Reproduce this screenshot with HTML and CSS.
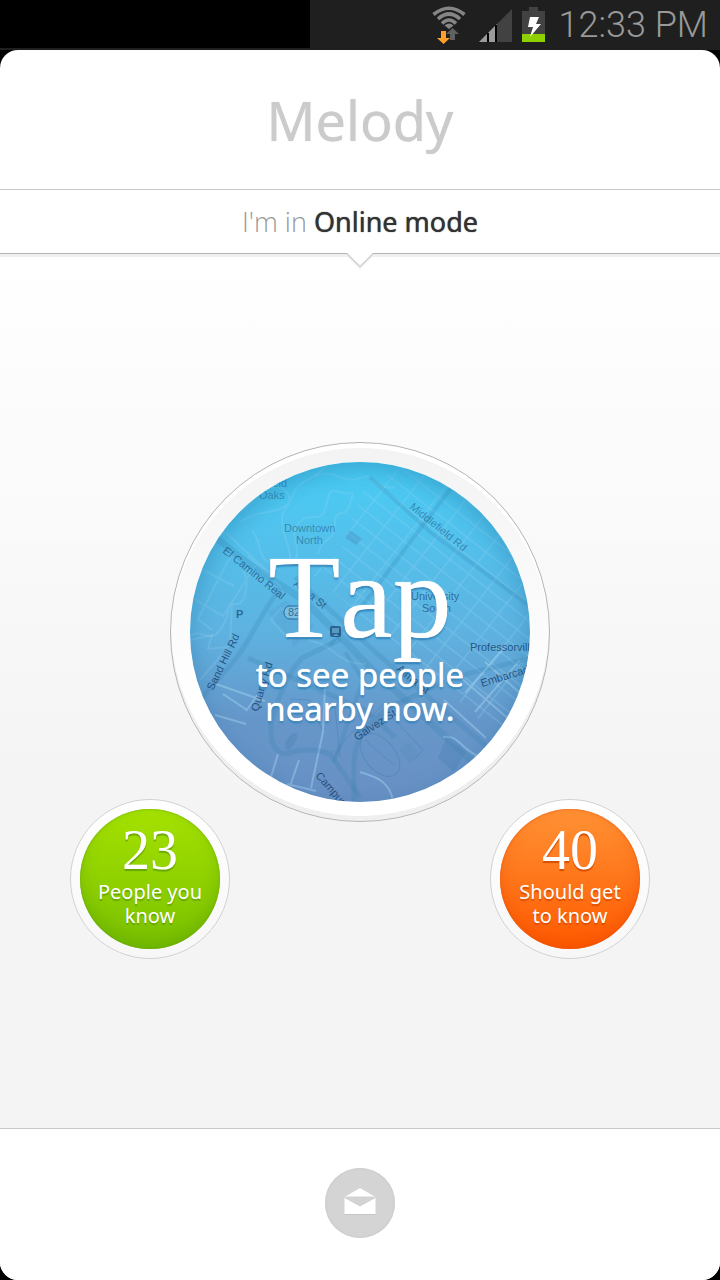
FILE: index.html
```html
<!DOCTYPE html>
<html lang="en">
<head>
<meta charset="utf-8">
<meta name="viewport" content="width=device-width, initial-scale=1">
<title>Melody</title>
<link rel="stylesheet" href="styles.css">
</head>
<body>
<div class="status">
  <div class="status-notices"></div>
  <div class="status-icons">
    <svg class="wifi" width="36" height="40" viewBox="0 0 36 40" aria-hidden="true">
      <g fill="none" stroke="#858585" stroke-width="3.6">
        <path d="M1.500 8.500Q17 -4 32.500 8.500"/>
        <path d="M6 13Q17 3 28 13"/>
        <path d="M10 17.500Q17 10.500 24 17.500"/>
      </g>
      <path d="M12.500 19.500Q17 15.500 21.500 19.500L17 23Z" fill="#858585"/>
      <path d="M9 25h5v7h4l-6.500 6L5 32h4z" fill="#ff9f2a"/>
      <path d="M18 34v-6h-4l6.500-6 6.500 6h-4v6z" fill="#606060"/>
    </svg>
    <svg class="signal" width="34" height="34" viewBox="0 0 34 34" aria-hidden="true">
      <path d="M0 33L33 0V33Z" fill="#424242"/>
      <path d="M0 33L18 15V33Z" fill="#9b9b9b"/>
      <path d="M9 24V33M17 16V33" stroke="#000" stroke-width="2"/>
    </svg>
    <svg class="battery" width="23" height="35" viewBox="0 0 23 35" aria-hidden="true">
      <path d="M0 4H7V0H16V4H23V35H0Z" fill="#424242"/>
      <path d="M0 27H23V35H0Z" fill="#8fd000"/>
      <path d="M8 10H17L14 17H19L8 30L11 20H6Z" fill="#fff"/>
    </svg>
    <time>12:33 PM</time>
  </div>
</div>

<div class="app">
  <header class="header"><h1>Melody</h1></header>
  <div class="mode">
    <p>I'm in <strong>Online mode</strong></p>
    <svg class="notch" width="28" height="17" viewBox="0 0 28 17" aria-hidden="true">
      <path d="M1 3L14 15.500L27 3" fill="none" stroke="#ececec" stroke-width="2"/>
      <path d="M0 0L0.500 1L14 14.500L27.500 1L28 0Z" fill="#fff"/>
      <path d="M0.500 1L14 14.500L27.500 1" fill="none" stroke="#b4b4b4"/>
    </svg>
  </div>

  <main class="stage">
    <button class="tap" type="button">
      <span class="tap-disc">
        <svg class="map" viewBox="0 0 340 340" aria-hidden="true">
          <defs>
            <linearGradient id="sky" x1="0" y1="0" x2="0" y2="1">
              <stop offset="0" stop-color="#48cef6"/>
              <stop offset="0.500" stop-color="#5eb2e0"/>
              <stop offset="0.750" stop-color="#6697ca"/>
              <stop offset="1" stop-color="#6990c4"/>
            </linearGradient>
            <pattern id="blocks" width="24" height="14" patternUnits="userSpaceOnUse" patternTransform="rotate(38)">
              <path d="M0 0.500H24M0.500 0V14" fill="none" stroke="#8fd4f3" stroke-opacity="0.350" stroke-width="1.500"/>
            </pattern>
          </defs>
          <rect width="340" height="340" fill="url(#sky)"/>
          <path d="M150 90L176 20L230 0H340V270L300 268L215 190L120 110Z" fill="url(#blocks)"/>
          <g fill="none" stroke="#a6def6" stroke-opacity="0.200" stroke-width="2">
            <path d="M50 60C70 45 95 55 102 35S125 20 140 0M35 70L62 95L85 116M62 68C75 85 64 101 90 103S82 63 95 48S90 18 75 28S62 45 45 50"/>
            <path d="M105 97C113 88 98 76 108 62S130 62 135 48S136 25 150 30S165 24 160 42S145 42 145 62S133 72 128 92M125 14C145 5 151 23 170 16S185 30 205 25"/>
            <path d="M15 109L44 124M42 91L8 157L22 168M65 104L33 154L4 137M58 94L92 126M0 174C14 165 20 185 32 165S34 140 45 142S59 120 54 110"/>
            <path d="M0 178L22 173L18 187L37 185L24 202L10 218M42 142L40 180M81 158L91 146L114 161L101 179Z"/>
            <path d="M118 178C150 185 145 202 176 202"/>
          </g>
          <g fill="none" stroke="#a7d5f2" stroke-opacity="0.450" stroke-width="2">
            <path d="M26 222L75 239M33 232L57 248M56 249L69 231M25 253L56 262M88 292L81 315M109 298L99 327M97 322L126 329M135 225L133 270L121 326"/>
            <path d="M253 275C270 273 270 287 290 295M170 310C187 315 200 320 203 339M270 215L322 260M295 200L331 232M254 238L296 276M330 198L285 250M316 184L275 231M340 235L312 272"/>
          </g>
          <g fill="none" stroke="#327fae" stroke-opacity="0.220">
            <path d="M15 67L60 103L115 139L180 205L310 325" stroke-width="7"/>
            <path d="M105 115L185 190L303 290" stroke-width="5"/>
            <path d="M180 15L240 70L345 148" stroke-width="4"/>
            <path d="M262 25L224 75L170 147L140 183" stroke-width="4"/>
            <path d="M90 127C67 155 62 182 30 215S10 250 0 255" stroke-width="5"/>
            <path d="M151 177L112 196Q94 215 81 260Q79 290 95 292Q120 284 140 292L170 335" stroke-width="5"/>
            <path d="M58 196L175 248L205 275M345 195L265 215L205 243Q165 265 164 300V340" stroke-width="5"/>
            <path d="M155 190L173 218L144 300" stroke-width="4"/>
          </g>
          <g fill="none" stroke="#326c9f" stroke-opacity="0.250">
            <path d="M100 237L120 238L132 268M145 246L150 295M195 240C180 260 158 265 145 295"/>
            <ellipse cx="190" cy="293" rx="15" ry="25" transform="rotate(-40 190 293)"/>
            <path d="M202 255L233 288L224 298M175 278L205 304"/>
          </g>
          <g fill="#477faf" fill-opacity="0.300">
            <path d="M160 68L172 77L166 83L155 76ZM256 276L276 290L264 310L248 296Z"/>
            <path d="M95 280Q100 270 108 271Q107 281 99 288Q94 287 95 280Z"/>
            <path d="M210 288L218 280L229 292L220 301Z" fill-opacity="0.150"/>
            <path d="M78 150L96 138L124 164L104 185Z" fill-opacity="0.120"/>
          </g>
          <g class="map-names">
            <g fill-opacity="0.450">
              <text x="77" y="25">field</text><text x="69" y="37">Oaks</text>
              <text x="94" y="70">Downtown</text><text x="106" y="82">North</text>
              <text transform="translate(219 46) rotate(39)">Middlefield Rd</text>
            </g>
            <g fill-opacity="0.650">
              <text transform="translate(32 90) rotate(39)">El Camino Real</text>
              <text transform="translate(103 123) rotate(39)">Alma St</text>
              <text x="221" y="138">University</text><text x="232" y="150">South</text>
              <text x="46" y="156" class="map-bold">P</text>
              <rect x="94" y="144" width="19" height="13" rx="6" fill="#8ac7e8" stroke="#276b9b"/>
              <text x="98" y="154">82</text>
              <rect x="140" y="164" width="11" height="11" rx="2"/>
              <path d="M142 166H149V171H142ZM143 174L145 172H147L149 174Z" fill="#6fb9e1"/>
            </g>
            <g fill-opacity="0.800">
              <text x="280" y="189">Professorville</text>
              <text transform="translate(292 225) rotate(-17)">Embarcadero</text>
              <text transform="translate(23 229) rotate(-64)">Sand Hill Rd</text>
              <text transform="translate(68 250) rotate(-73)">Quarry Rd</text>
              <text transform="translate(167 279) rotate(-33)">Galvez St</text>
              <text transform="translate(206 208) rotate(39)">Alma St</text>
              <text transform="translate(125 314) rotate(49)">Campus Dr</text>
            </g>
          </g>
        </svg>
        <span class="tap-text">
          <span class="tap-title">Tap</span>
          <span class="tap-note">to see people<br>nearby now.</span>
        </span>
      </span>
    </button>
    <div class="counts">
      <button class="count" type="button">
        <span class="count-disc count-green">
          <span class="count-number">23</span>
          <span class="count-label">People you<br>know</span>
        </span>
      </button>
      <button class="count" type="button">
        <span class="count-disc count-orange">
          <span class="count-number">40</span>
          <span class="count-label">Should get<br>to know</span>
        </span>
      </button>
    </div>
  </main>

  <footer class="footer">
    <button class="mail" type="button" aria-label="Messages">
      <svg width="32" height="28" viewBox="0 0 32 28" aria-hidden="true">
        <path d="M0.500 9L16 0L31.500 9V26H0.500Z" fill="#fff"/>
        <path d="M0.500 8.500H31.500V10L16 18.500L0.500 10Z" fill="#d3d3d3"/>
        <path d="M0.500 26.500H31.500" stroke="#c5c5c5"/>
      </svg>
    </button>
  </footer>
</div>
</body>
</html>
```
FILE: styles.css
```css
* { box-sizing: border-box; }
body {
  margin: 0;
  min-height: 100vh;
  display: flex;
  flex-direction: column;
  background: #000;
  font-family: "Noto Sans", "Open Sans", sans-serif;
}
button { border: 0; padding: 0; font: inherit; cursor: pointer; }
h1, p { margin: 0; font-weight: 400; }

.status {
  height: 50px;
  display: flex;
  justify-content: space-between;
  background: #1f1f1f;
}
.status-notices { width: 43%; height: 48px; background: #000; }
.status-icons { display: flex; align-items: flex-start; padding-right: 12px; }
.status-icons svg { flex: none; }
.wifi { margin: 6px 11px 0 0; }
.signal { margin: 9px 9px 0 0; }
.battery { margin: 7px 13px 0 0; }
.status time {
  font: 300 36px/50px Roboto, sans-serif;
  color: #999;
  white-space: nowrap;
}

.app {
  flex: 1;
  display: flex;
  flex-direction: column;
  overflow: hidden;
  border-radius: 18px;
  background: #fff;
}
.header {
  height: 140px;
  display: flex;
  justify-content: center;
  align-items: center;
  border-bottom: 1px solid #c8c8c8;
}
.header h1 { font-size: 54px; line-height: 72px; color: #cbcbcb; text-shadow: 0 0 1px #cbcbcb; }
.mode {
  position: relative;
  height: 64px;
  display: flex;
  justify-content: center;
  align-items: center;
  border-bottom: 1px solid #b4b4b4;
  box-shadow: 0 3px 0 #efefef;
}
.mode p { font-family: "Open Sans", sans-serif; font-size: 27px; line-height: 36px; font-weight: 300; color: #999; }
.mode strong { font-family: "Noto Sans", sans-serif; font-weight: 400; color: #333; text-shadow: 0 0 1px #333; }
.notch { position: absolute; left: calc(50% - 14px); top: 62px; }

.stage {
  flex: 1;
  display: flex;
  flex-direction: column;
  align-items: center;
  justify-content: center;
  padding: 18px 0 0;
  background: linear-gradient(#fff, #f4f4f4 62%);
}
.tap {
  width: 380px;
  height: 380px;
  padding: 19px;
  border: 1px solid #b5b5b5;
  border-radius: 50%;
  background: linear-gradient(#f3f3f3, #fff 70%);
  box-shadow: inset 0 5px 0 #fff, inset 0 -5px 0 #efefef;
}
.tap-disc {
  display: grid;
  width: 340px;
  height: 340px;
  overflow: hidden;
  border-radius: 50%;
  color: #fff;
}
.map, .tap-text { grid-area: 1 / 1; }
.map { width: 340px; height: 340px; }
.map-names { font: 11px "Liberation Sans", sans-serif; fill: #153c69; }
.map-bold { font-weight: 700; }
.tap-text {
  z-index: 1;
  padding-top: 86px;
  border-radius: 50%;
  text-shadow: 0 0 1px #fff, 0 2px 2px #2d7fb5;
  box-shadow: inset 0 8px 22px rgba(32, 112, 160, 0.4);
}
.tap-title { display: block; font: 118px/100px "Liberation Serif", serif; font-kerning: none; }
.tap-note { display: block; margin-top: 10px; font-size: 33px; line-height: 34px; }

.counts {
  align-self: stretch;
  display: flex;
  justify-content: space-between;
  margin-top: -23px;
  padding: 0 70px;
}
.count {
  width: 160px;
  height: 160px;
  padding: 9px;
  border: 1px solid #d2d2d2;
  border-radius: 50%;
  background: linear-gradient(#fff, #f7f7f7);
}
.count-disc {
  display: block;
  width: 140px;
  height: 140px;
  padding-top: 13px;
  border-radius: 50%;
  color: #fff;
}
.count-green {
  background: linear-gradient(#a6e200, #79c000);
  box-shadow: inset 0 0 2px #62a000, inset 0 -6px 16px rgba(80, 150, 0, 0.35);
  text-shadow: 0 2px 1px #68a600;
}
.count-orange {
  background: linear-gradient(#ff9235, #ff5a00);
  box-shadow: inset 0 0 2px #e04c00, inset 0 -6px 16px rgba(225, 70, 0, 0.35);
  text-shadow: 0 2px 1px #d94f00;
}
.count-number { display: block; font: 56px/56px "Liberation Serif", serif; }
.count-label { display: block; margin-top: 2px; font-size: 20px; line-height: 24px; }

.footer {
  height: 152px;
  display: flex;
  align-items: center;
  justify-content: center;
  padding-bottom: 3px;
  border-top: 1px solid #c9c9c9;
  background: #fff;
}
.mail {
  width: 70px;
  height: 70px;
  display: grid;
  place-items: center;
  padding-bottom: 2px;
  border-radius: 50%;
  background: #d4d4d4;
  box-shadow: inset 0 0 2px #bbb;
}
```
